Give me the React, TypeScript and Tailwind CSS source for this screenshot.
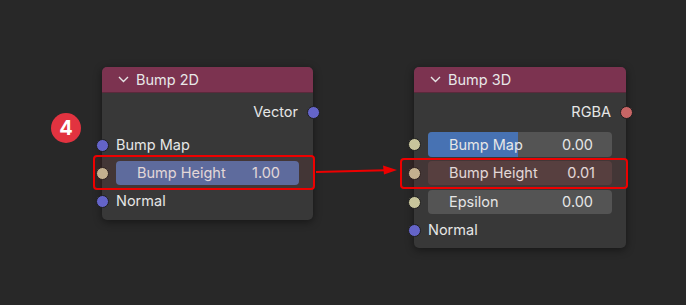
import React from "react";

const font = { fontFamily: "Inter, 'DejaVu Sans', sans-serif" };

function Socket({ color, className }: { color: string; className: string }) {
  return (
    <div
      className={`absolute w-[13px] h-[13px] rounded-full border border-[#1e1e1e] ${className}`}
      style={{ backgroundColor: color }}
    />
  );
}

function Chevron() {
  return (
    <svg width="11" height="7" viewBox="0 0 11 7" className="shrink-0">
      <path d="M1 1 L5.5 5.5 L10 1" stroke="#e6e6e6" strokeWidth="1.4" fill="none" />
    </svg>
  );
}

export default function App() {
  return (
    <div className="relative w-[686px] h-[305px] bg-[#282828] overflow-hidden text-[14.5px] text-[#e6e6e6]" style={font}>
      {/* Node 1 */}
      <div className="absolute left-[102px] top-[67px] w-[211px] h-[153px] rounded-[5px] bg-[#383838] shadow-[0_2px_8px_rgba(0,0,0,0.45)] flex flex-col">
        <div className="h-[26px] shrink-0 rounded-t-[5px] bg-[#7c3350] flex items-center gap-[7px] pl-[16px] border-b border-[#5a2a3c]">
          <Chevron />
          <span className="text-[#e8e8e8]">Bump 2D</span>
        </div>
        <div className="relative flex-1 flex flex-col">
          <div className="h-[36px] flex items-center justify-end pr-[15px] pt-[2px]">Vector</div>
          <div className="h-[32px] flex items-center pl-[14px]">Bump Map</div>
          <div className="h-[24px] px-[14px]">
            <div className="w-full h-[24px] rounded-[4px] bg-[#5571a8] flex items-center justify-between pl-[21px] pr-[19px]">
              <span>Bump Height</span>
              <span>1.00</span>
            </div>
          </div>
          <div className="h-[32px] flex items-center pl-[14px]">Normal</div>
          <Socket color="#6464c8" className="right-[-6.5px] top-[12.5px]" />
          <Socket color="#6464c8" className="left-[-6.5px] top-[45.5px]" />
          <Socket color="#c4bc98" className="left-[-6.5px] top-[73.5px]" />
          <Socket color="#6464c8" className="left-[-6.5px] top-[101.5px]" />
        </div>
      </div>

      {/* Node 2 */}
      <div className="absolute left-[414px] top-[67px] w-[212px] h-[181px] rounded-[5px] bg-[#383838] shadow-[0_2px_8px_rgba(0,0,0,0.45)] flex flex-col">
        <div className="h-[26px] shrink-0 rounded-t-[5px] bg-[#7c3350] flex items-center gap-[7px] pl-[16px] border-b border-[#5a2a3c]">
          <Chevron />
          <span className="text-[#e8e8e8]">Bump 3D</span>
        </div>
        <div className="relative flex-1 flex flex-col">
          <div className="h-[36px] flex items-center justify-end pr-[15px] pt-[2px]">RGBA</div>
          <div className="flex flex-col px-[14px] pt-[3px]">
            <div className="relative w-full h-[25px] rounded-[4px] bg-[#545454] overflow-hidden flex items-center justify-between pl-[21px] pr-[19px]">
              <div className="absolute left-0 top-0 h-full w-[90px] bg-[#4772b3]" />
              <span className="relative">Bump Map</span>
              <span className="relative">0.00</span>
            </div>
            <div className="mt-[4px] w-full h-[24px] rounded-[4px] bg-[#4e4242] flex items-center justify-between pl-[21px] pr-[17px]">
              <span>Bump Height</span>
              <span>0.01</span>
            </div>
            <div className="mt-[5px] w-full h-[24px] rounded-[4px] bg-[#545454] flex items-center justify-between pl-[21px] pr-[19px]">
              <span>Epsilon</span>
              <span>0.00</span>
            </div>
          </div>
          <div className="h-[32px] flex items-center pl-[14px]">Normal</div>
          <Socket color="#c76565" className="right-[-6.5px] top-[12.5px]" />
          <Socket color="#c8c59c" className="left-[-6.5px] top-[45px]" />
          <Socket color="#c4bc98" className="left-[-6.5px] top-[73.5px]" />
          <Socket color="#c8c59c" className="left-[-6.5px] top-[102.5px]" />
          <Socket color="#6464c8" className="left-[-6.5px] top-[130.5px]" />
        </div>
      </div>

      {/* Annotation boxes */}
      <div className="absolute left-[93px] top-[155px] w-[222px] h-[35px] rounded-[4px] border-2 border-[#ee0000] bg-[rgba(200,40,40,0.08)]" />
      <div className="absolute left-[400px] top-[158px] w-[228px] h-[31px] rounded-[4px] border-2 border-[#ee0000] bg-[rgba(200,40,40,0.08)]" />

      {/* Arrow */}
      <svg className="absolute left-0 top-0" width="686" height="305">
        <line x1="316" y1="172" x2="386" y2="170.2" stroke="#ee0000" strokeWidth="2" />
        <polygon points="397,170 383,165.5 384,174.5" fill="#ee0000" />
      </svg>

      {/* Badge */}
      <div className="absolute left-[51px] top-[113px] w-[30px] h-[30px] rounded-full bg-[#e23340] flex items-center justify-center text-white font-bold text-[20px]">
        4
      </div>
    </div>
  );
}
